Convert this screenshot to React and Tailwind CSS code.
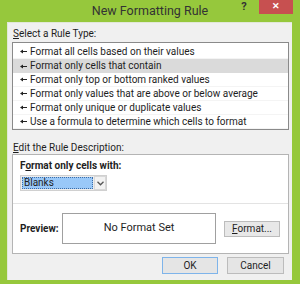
import React from 'react'

const RULES = [
  'Format all cells based on their values',
  'Format only cells that contain',
  'Format only top or bottom ranked values',
  'Format only values that are above or below average',
  'Format only unique or duplicate values',
  'Use a formula to determine which cells to format',
]

// 小さい左向き矢印（Excel のルール種別リストの行頭記号）
function RuleArrow() {
  return (
    <svg width="7" height="5" viewBox="0 0 7 5" className="shrink-0">
      <path d="M0 2.5 L3 0.5 L3 4.5 Z" fill="#222" />
      <rect x="2.5" y="2" width="4.5" height="1" fill="#222" />
    </svg>
  )
}

function RuleRow({ label, selected }) {
  return (
    <div
      className={
        selected
          ? 'h-[14px] flex items-center gap-[3px] pl-[7px] bg-[#dadada]'
          : 'h-[14px] flex items-center gap-[3px] pl-[7px] bg-white border-b border-[#f4f4f4]'
      }
    >
      <RuleArrow />
      <span className="leading-none">{label}</span>
    </div>
  )
}

export default function App() {
  return (
    <div
      className="w-[300px] h-[284px] bg-[#96c83c] flex flex-col text-[10px] text-[#1e1e1e] whitespace-nowrap"
      style={{ fontFamily: 'Roboto, "Liberation Sans", sans-serif' }}
    >
      {/* タイトルバー：左右に同じ幅を取って中央揃え */}
      <div className="h-[22px] flex items-start shrink-0">
        <div className="w-[63px]" />
        <div className="flex-1 h-full flex items-center justify-center text-[12.5px] text-[#333]">
          New Formatting Rule
        </div>
        <div className="w-[63px] flex">
          <div className="w-[14px] h-[14px] flex items-center justify-center text-[11px] font-bold text-[#333] mr-[8px]">
            ?
          </div>
          <div className="w-[34px] h-[14px] bg-[#c75050] flex items-center justify-center text-white text-[9px] font-bold">
            ✕
          </div>
        </div>
      </div>

      {/* 本体 */}
      <div className="ml-[7px] mr-[8px] h-[258px] bg-[#f0f0f0] border-l border-t border-[#e2e8d8] flex flex-col">
        <div className="pl-[5px] pt-[4px] h-[13px] leading-[13px] box-content">
          <span className="underline">S</span>elect a Rule Type:
        </div>

        <div className="ml-[4px] mt-[2px] w-[277px] h-[88px] border border-[#8a8a8a] bg-white pt-[2px]">
          {RULES.map((r, i) => (
            <RuleRow key={r} label={r} selected={i === 1} />
          ))}
        </div>

        <div className="pl-[5px] mt-[11px] h-[13px] leading-[13px]">
          <span className="underline">E</span>dit the Rule Description:
        </div>

        <div className="ml-[4px] w-[277px] h-[100px] border border-[#b4b4b4] bg-white flex flex-col">
          <div className="h-[49px] border-b border-[#e3e3e3] pl-[7px] pt-[4px]">
            <div className="h-[13px] leading-[13px] font-bold">
              F<span className="underline">o</span>rmat only cells with:
            </div>
            <div className="mt-[3px] flex items-center w-[87px] h-[16px] border border-[#d0d0d0] bg-[#ececec]">
              <div className="ml-[1px] w-[71px] h-[12px] bg-[#99c8f8] border border-dotted border-[#3c6da8] flex items-center pl-[1px] leading-none">
                Blanks
              </div>
              <div className="ml-[1px] flex-1 h-[14px] border border-[#d8d8d8] bg-[#f2f2f2] flex items-center justify-center">
                <svg width="7" height="5" viewBox="0 0 7 5">
                  <path d="M0.5 0.8 L3.5 3.8 L6.5 0.8" stroke="#555" strokeWidth="1.3" fill="none" />
                </svg>
              </div>
            </div>
          </div>

          <div className="flex-1 flex items-center pl-[7px]">
            <div className="w-[42px] font-bold">Preview:</div>
            <div className="w-[154px] h-[31px] border border-[#a0a0a0] flex items-center justify-center text-[11px] mt-[-1px]">
              No Format Set
            </div>
            <button className="ml-[8px] w-[56px] h-[16px] border border-[#bcbcbc] bg-[#e8e8e8] flex items-center justify-center leading-none">
              <span className="underline">F</span>ormat...
            </button>
          </div>
        </div>

        <div className="mt-[3px] flex justify-end gap-[9px] pr-[8px]">
          <button className="w-[56px] h-[17px] border border-[#7eb4ea] bg-[#e5e5e5] flex items-center justify-center leading-none">
            OK
          </button>
          <button className="w-[57px] h-[17px] border border-[#bcbcbc] bg-[#e5e5e5] flex items-center justify-center leading-none">
            Cancel
          </button>
        </div>
      </div>
    </div>
  )
}
